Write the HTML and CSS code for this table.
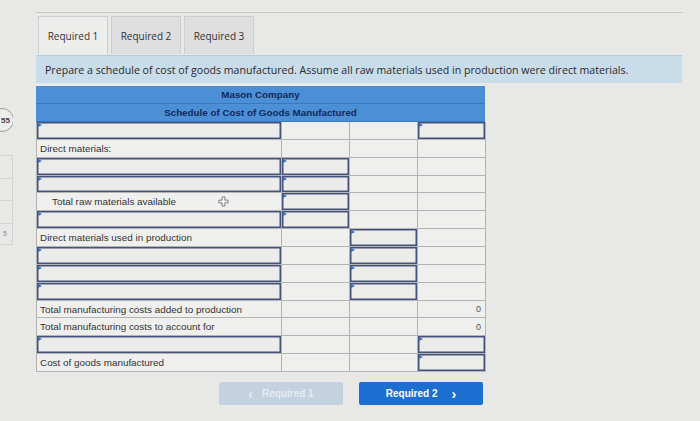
FILE: index.html
```html
<!DOCTYPE html>
<html>
<head>
<meta charset="utf-8">
<link rel="stylesheet" href="styles.css">
</head>
<body>
<div class="page">
  <aside class="side">
    <div class="badge">55</div>
    <div class="side-boxes">
      <div class="sbox"></div>
      <div class="sbox"></div>
      <div class="sbox"></div>
      <div class="sbox"><span class="snum">5</span></div>
    </div>
  </aside>
  <main class="main">
    <div class="topline"></div>
    <nav class="tabs">
      <div class="tab active">Required 1</div>
      <div class="tab">Required 2</div>
      <div class="tab">Required 3</div>
    </nav>
    <div class="instr">Prepare a schedule of cost of goods manufactured. Assume all raw materials used in production were direct materials.</div>
    <div class="sheet">
      <div class="head">Mason Company</div>
      <div class="head">Schedule of Cost of Goods Manufactured</div>
      <div class="grid">
        <div class="c in"></div><div class="c"></div><div class="c"></div><div class="c in"></div>
        <div class="c lbl">Direct materials:</div><div class="c"></div><div class="c"></div><div class="c"></div>
        <div class="c in"></div><div class="c in"></div><div class="c"></div><div class="c"></div>
        <div class="c in"></div><div class="c in"></div><div class="c"></div><div class="c"></div>
        <div class="c lbl ind">Total raw materials available<svg class="move" viewBox="0 0 12 12" width="11" height="11"><path d="M4.5 1h3v3.5H11v3H7.5V11h-3V7.5H1v-3h3.5z" fill="#f4f4f4" stroke="#777" stroke-width="1"/></svg></div><div class="c in"></div><div class="c"></div><div class="c"></div>
        <div class="c in"></div><div class="c in"></div><div class="c"></div><div class="c"></div>
        <div class="c lbl">Direct materials used in production</div><div class="c"></div><div class="c in"></div><div class="c"></div>
        <div class="c in"></div><div class="c"></div><div class="c in"></div><div class="c"></div>
        <div class="c in"></div><div class="c"></div><div class="c in"></div><div class="c"></div>
        <div class="c in"></div><div class="c"></div><div class="c in"></div><div class="c"></div>
        <div class="c lbl">Total manufacturing costs added to production</div><div class="c"></div><div class="c"></div><div class="c num">0</div>
        <div class="c lbl">Total manufacturing costs to account for</div><div class="c"></div><div class="c"></div><div class="c num">0</div>
        <div class="c in"></div><div class="c"></div><div class="c"></div><div class="c in"></div>
        <div class="c lbl">Cost of goods manufactured</div><div class="c"></div><div class="c"></div><div class="c in"></div>
      </div>
    </div>
    <div class="nav">
      <button class="btn prev"><span class="chev">&lsaquo;</span>Required 1</button>
      <button class="btn next">Required 2<span class="chev r">&rsaquo;</span></button>
    </div>
  </main>
</div>
</body>
</html>
```
FILE: styles.css
```css
* { box-sizing: border-box; }
html, body { margin: 0; padding: 0; }
body {
  background: #e8e8e6;
  font-family: "Liberation Sans", Arial, sans-serif;
  width: 700px;
  height: 421px;
  overflow: hidden;
}
.page { display: flex; }
.side { width: 13px; overflow: hidden; flex: none; }
.badge {
  margin-top: 108px;
  margin-left: -10px;
  width: 24px;
  height: 24px;
  border: 1px solid #9a9a9a;
  border-radius: 50%;
  font-size: 8px;
  font-weight: bold;
  color: #444;
  display: flex;
  align-items: center;
  justify-content: flex-end;
  padding-right: 3px;
  background: #ededeb;
}
.side-boxes { margin-top: 23px; border-right: 1px solid #d4d4d2; }
.sbox { height: 22.5px; border-top: 1px solid #d4d4d2; position: relative; }
.sbox:last-child { border-bottom: 1px solid #d4d4d2; }
.snum { position: absolute; left: 3px; top: 6px; font-size: 7px; color: #888; }

.main { width: 670px; padding-left: 23px; }
.topline { margin-top: 12px; height: 1px; background: #c8c8c6; width: 647px; }
.tabs { display: flex; gap: 3px; margin-top: 3px; padding-left: 2px; }
.tab {
  width: 70px;
  height: 38px;
  background: #dedede;
  border: 1px solid #cdcdcd;
  border-bottom: none;
  font-family: "Open Sans", sans-serif;
  font-size: 10px;
  color: #333;
  display: flex;
  align-items: center;
  justify-content: center;
}
.tab.active { background: #ededec; }
.instr {
  width: 646px;
  height: 28px;
  margin-top: 1px;
  background: #c9dcea;
  border-top: 1px solid #b9cbd8;
  font-family: "Open Sans", sans-serif;
  font-size: 10.6px;
  color: #2a2a2a;
  padding-left: 9px;
  display: flex;
  align-items: center;
  white-space: nowrap;
}
.sheet { width: 449px; margin-top: 3px; }
.head {
  height: 18px;
  background: #4b8fd7;
  border-bottom: 1px solid #3d77bb;
  color: #14285a;
  font-weight: bold;
  font-size: 9.8px;
  display: flex;
  align-items: center;
  justify-content: center;
}
.grid {
  display: grid;
  grid-template-columns: 245px 68px 68px 68px;
  grid-auto-rows: 17.86px;
  border-left: 1px solid #b3b3b3;
}
.c {
  background: #efefee;
  border-right: 1px solid #b3b3b3;
  border-bottom: 1px solid #b3b3b3;
  position: relative;
  font-size: 9.9px;
  color: #333;
  display: flex;
  align-items: center;
}
.lbl { padding-left: 3px; white-space: nowrap; }
.ind { padding-left: 15px; }
.num { justify-content: flex-end; padding-right: 4px; color: #555; font-size: 9px; }
.in {
  box-shadow: inset 0 0 0 1.5px #46537a;
  background: #ececeb;
}
.in::before {
  content: "";
  position: absolute;
  left: 1px;
  top: 1px;
  border-left: 4px solid #3a6fc4;
  border-top: 2.5px solid transparent;
  border-bottom: 2.5px solid transparent;
}
.move { position: absolute; left: 181px; top: 3px; }
.nav {
  width: 447px;
  display: flex;
  justify-content: flex-end;
  gap: 16px;
  margin-top: 10px;
}
.btn {
  width: 124px;
  height: 23px;
  border: none;
  border-radius: 2px;
  font-family: "Liberation Sans", Arial, sans-serif;
  font-weight: bold;
  font-size: 10px;
  display: flex;
  align-items: center;
  justify-content: center;
  padding: 0;
}
.prev { background: #c4d1de; color: #e6ecf3; }
.next { background: #1c6fd0; color: #ffffff; }
.chev { font-size: 14px; line-height: 1; margin-right: 9px; }
.chev.r { margin-right: 0; margin-left: 14px; }
```
